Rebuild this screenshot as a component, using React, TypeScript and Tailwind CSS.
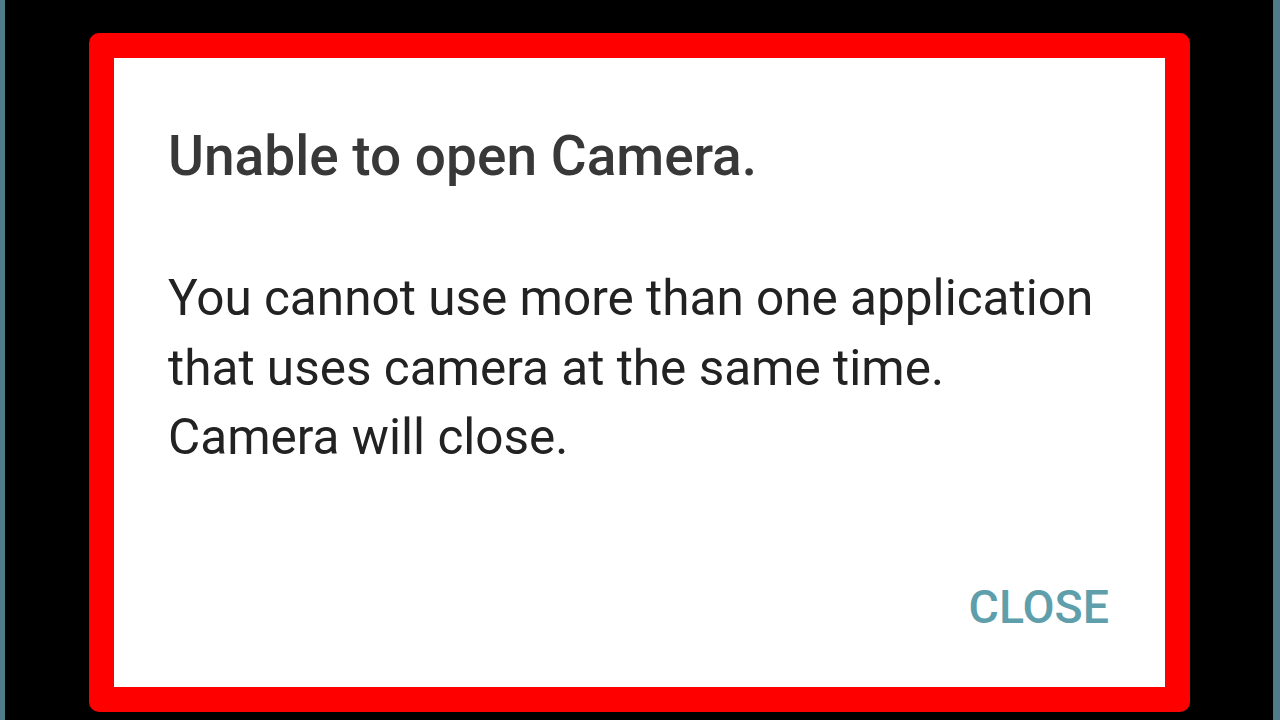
export default function App() {
  return (
    <div className="flex h-[720px] w-[1280px] bg-black" style={{ fontFamily: "Roboto, 'Noto Sans', sans-serif" }}>
      <div className="w-[5px] bg-[#4f7c88]" />
      <div className="flex-1 pl-[84px] pt-[33px]">
        <div className="flex h-[679px] w-[1101px] flex-col rounded-[10px] border-[25px] border-[#ff0000] bg-white pl-[54px] pr-[56px]">
          <div className="mt-[66px] text-[55px] font-medium leading-[64px] text-[#383838]">Unable to open Camera.</div>
          <div className="mt-[76px] text-[49.5px] leading-[69.5px] text-[#222222]">
            You cannot use more than one application
            <br />
            that uses camera at the same time.
            <br />
            Camera will close.
          </div>
          <div className="mt-auto mb-[52px] self-end text-[46.5px] font-medium leading-[56px] text-[#5f9eab]">CLOSE</div>
        </div>
      </div>
      <div className="w-[7px] bg-[#4f7c88]" />
    </div>
  );
}
